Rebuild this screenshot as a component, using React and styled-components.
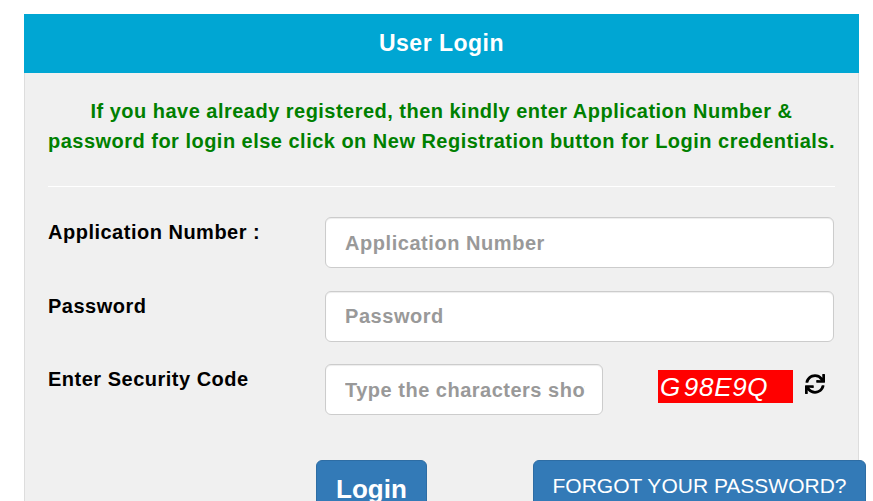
import React from "react";
import styled, { createGlobalStyle } from "styled-components";
import { FaSync } from "react-icons/fa";

const GlobalStyle = createGlobalStyle`
  * {
    box-sizing: border-box;
  }
  html, body {
    margin: 0;
    height: 501px;
    overflow: hidden;
    background: #fff;
    font-family: "Liberation Sans", Arial, sans-serif;
  }
`;

export default function App() {
  return (
    <>
      <GlobalStyle />
      <Page>
        <Panel>
          <PanelHeader>User Login</PanelHeader>
          <PanelBody>
            <Notice>
              If you have already registered, then kindly enter Application Number &amp;
              <br />
              password for login else click on New Registration button for Login credentials.
            </Notice>
            <Divider />
            <FormRow>
              <Label>Application Number :</Label>
              <Input placeholder="Application Number" />
            </FormRow>
            <FormRow>
              <Label>Password</Label>
              <Input type="password" placeholder="Password" />
            </FormRow>
            <FormRow>
              <Label>Enter Security Code</Label>
              <CaptchaRow>
                <CaptchaInput placeholder="Type the characters shown" />
                <CaptchaImage>G 98E9Q</CaptchaImage>
                <RefreshButton>
                  <FaSync />
                </RefreshButton>
              </CaptchaRow>
            </FormRow>
            <Actions>
              <LoginButton>Login</LoginButton>
              <ForgotButton>FORGOT YOUR PASSWORD?</ForgotButton>
            </Actions>
          </PanelBody>
        </Panel>
      </Page>
    </>
  );
}

const Page = styled.div`
  padding: 14px 14px 0 24px;
`;

const Panel = styled.div`
  width: 835px;
  background: #f0f0f0;
  border-right: 1px solid #ddd;
  border-left: 1px solid #ddd;
`;

const PanelHeader = styled.div`
  height: 59px;
  margin: 0 -1px;
  background: #00a6d3;
  color: #fff;
  font-size: 23px;
  font-weight: 700;
  letter-spacing: 0.5px;
  line-height: 59px;
  text-align: center;
`;

const PanelBody = styled.div`
  padding: 23px 23px 0;
`;

const Notice = styled.p`
  margin: 0;
  color: #008000;
  font-size: 20px;
  font-weight: 700;
  letter-spacing: 0.48px;
  line-height: 30px;
  text-align: center;
  white-space: nowrap;
`;

const Divider = styled.hr`
  margin: 30px 0 30px;
  border: 0;
  border-top: 1px solid #fff;
`;

const FormRow = styled.div`
  display: grid;
  grid-template-columns: 277px 509px;
  height: 73.5px;
`;

const Label = styled.label`
  color: #000;
  font-size: 20px;
  font-weight: 700;
  letter-spacing: 0.5px;
  line-height: 30px;
`;

const Input = styled.input`
  width: 100%;
  height: 51px;
  padding: 1px 19px 0;
  background: #fff;
  border: 1px solid #ccc;
  border-radius: 6px;
  box-shadow: inset 0 1px 1px rgba(0, 0, 0, 0.075);
  color: #555;
  font-family: inherit;
  font-size: 20px;
  font-weight: 700;
  letter-spacing: 0.55px;
  outline: none;

  &::placeholder {
    color: #999;
    opacity: 1;
  }
`;

const CaptchaRow = styled.div`
  display: flex;
  align-items: flex-start;
`;

const CaptchaInput = styled(Input)`
  width: 278px;
  flex: none;
  padding-right: 17px;
  letter-spacing: 0.5px;
`;

const CaptchaImage = styled.span`
  width: 135px;
  height: 33px;
  margin: 6px 0 0 55px;
  padding-left: 2px;
  background: #f00;
  color: #fff;
  font-size: 26px;
  font-style: italic;
  letter-spacing: 0.7px;
  word-spacing: -5px;
  line-height: 34px;
  white-space: pre;
`;

const RefreshButton = styled.span`
  display: flex;
  margin: 10px 0 0 12px;
  color: #000;
  font-size: 20px;
`;

const Actions = styled.div`
  display: flex;
  align-items: flex-start;
  margin-top: 22px;
  padding-left: 268px;
`;

const BaseButton = styled.button`
  background: #337ab7;
  border: 1px solid #2e6da4;
  border-radius: 6px;
  color: #fff;
  font-family: inherit;
`;

const LoginButton = styled(BaseButton)`
  width: 111px;
  height: 60px;
  flex: none;
  font-size: 26px;
  font-weight: 700;
`;

const ForgotButton = styled(BaseButton)`
  width: 333px;
  height: 50px;
  flex: none;
  margin-left: 106px;
  padding: 2px 0 0;
  font-size: 21px;
  white-space: nowrap;
`;
